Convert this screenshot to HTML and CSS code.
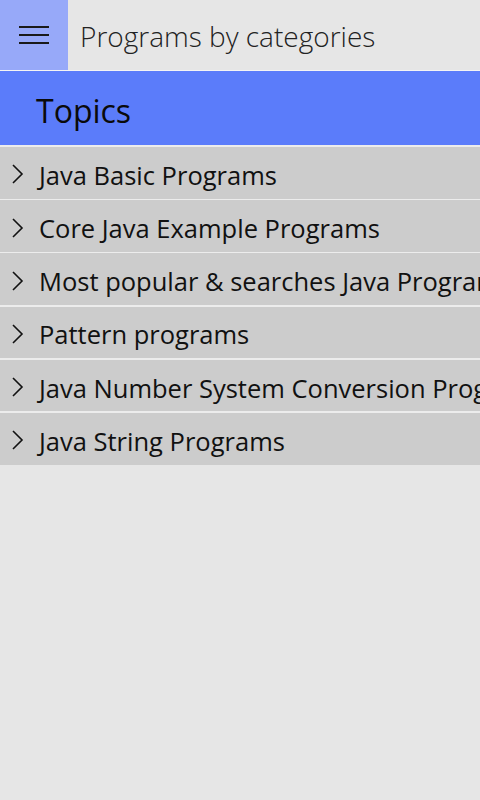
FILE: index.html
```html
<!DOCTYPE html>
<html lang="en">

<head>
    <meta charset="UTF-8">
    <meta name="viewport" content="width=device-width, initial-scale=1.0">
    <title>Programs by categories</title>
    <link rel="stylesheet" href="styles.css">
</head>

<body>
    <div class="app-bar">
        <div class="menu-btn">
            <svg width="30" height="20" viewBox="0 0 30 20">
                <path d="M0 2h30M0 10h30M0 18h30" stroke="#1a1a1a" stroke-width="2" fill="none" />
            </svg>
        </div>
        <div class="app-title">Programs by categories</div>
    </div>

    <div class="section-head">Topics</div>

    <ul class="topics">
        <li class="topic">
            <svg class="chev" width="12" height="20" viewBox="0 0 12 20">
                <path d="M1 1l9 9-9 9" stroke="#111" stroke-width="1.6" fill="none" />
            </svg>
            <span>Java Basic Programs</span>
        </li>
        <li class="topic">
            <svg class="chev" width="12" height="20" viewBox="0 0 12 20">
                <path d="M1 1l9 9-9 9" stroke="#111" stroke-width="1.6" fill="none" />
            </svg>
            <span>Core Java Example Programs</span>
        </li>
        <li class="topic">
            <svg class="chev" width="12" height="20" viewBox="0 0 12 20">
                <path d="M1 1l9 9-9 9" stroke="#111" stroke-width="1.6" fill="none" />
            </svg>
            <span>Most popular &amp; searches Java Programs</span>
        </li>
        <li class="topic">
            <svg class="chev" width="12" height="20" viewBox="0 0 12 20">
                <path d="M1 1l9 9-9 9" stroke="#111" stroke-width="1.6" fill="none" />
            </svg>
            <span>Pattern programs</span>
        </li>
        <li class="topic">
            <svg class="chev" width="12" height="20" viewBox="0 0 12 20">
                <path d="M1 1l9 9-9 9" stroke="#111" stroke-width="1.6" fill="none" />
            </svg>
            <span>Java Number System Conversion Programs</span>
        </li>
        <li class="topic">
            <svg class="chev" width="12" height="20" viewBox="0 0 12 20">
                <path d="M1 1l9 9-9 9" stroke="#111" stroke-width="1.6" fill="none" />
            </svg>
            <span>Java String Programs</span>
        </li>
    </ul>
</body>

</html>
```

FILE: styles.css
```css
body {
    margin: 0;
    background-color: #e6e6e6;
    font-family: "Open Sans", "Noto Sans", sans-serif;
    color: #111;
    overflow: hidden;
}

.app-bar {
    display: flex;
    height: 70px;
    border-bottom: 1px solid #f4f4f4;
}

.menu-btn {
    width: 68px;
    background-color: #97a9f9;
    display: flex;
    align-items: center;
    justify-content: center;
}

.app-title {
    padding-left: 12px;
    font-size: 28px;
    font-weight: 300;
    line-height: 72px;
    color: #222;
    white-space: nowrap;
}

.section-head {
    height: 74px;
    background-color: #5b7cfa;
    padding-left: 36px;
    font-size: 32px;
    line-height: 80px;
    color: #0a0a0a;
}

/* light lines between the rows come from the list background */
.topics {
    list-style: none;
    margin: 0;
    padding: 0;
    border-top: 2px solid #ececec;
    background-color: #ececec;
    display: flex;
    flex-direction: column;
    gap: 1.5px;
    overflow: hidden;
}

.topic {
    height: 51.7px;
    background-color: #cccccc;
    display: flex;
    align-items: center;
    white-space: nowrap;
    font-size: 25.5px;
    padding-top: 4px;
    box-sizing: border-box;
}

.chev {
    margin-left: 12px;
    margin-right: 15px;
    flex-shrink: 0;
    margin-top: -1px;
}
```
